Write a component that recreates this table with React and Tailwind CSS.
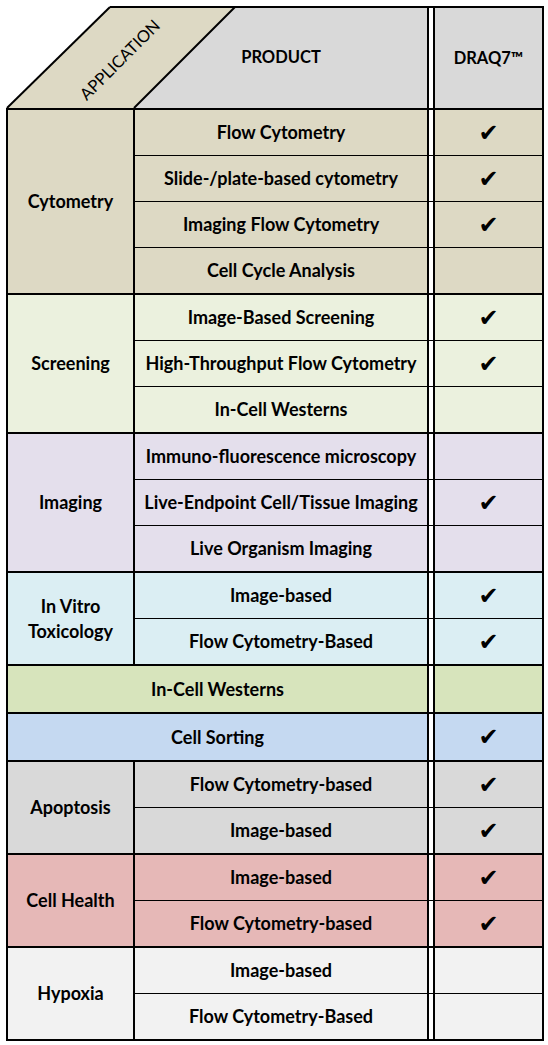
const CHECK = "\u2714";

const groups = [
  {
    name: "Cytometry",
    bg: "bg-[#ddd9c4]",
    rows: [
      ["Flow Cytometry", true],
      ["Slide-/plate-based cytometry", true],
      ["Imaging Flow Cytometry", true],
      ["Cell Cycle Analysis", false],
    ],
  },
  {
    name: "Screening",
    bg: "bg-[#ebf1de]",
    rows: [
      ["Image-Based Screening", true],
      ["High-Throughput Flow Cytometry", true],
      ["In-Cell Westerns", false],
    ],
  },
  {
    name: "Imaging",
    bg: "bg-[#e4dfec]",
    rows: [
      ["Immuno-fluorescence microscopy", false],
      ["Live-Endpoint Cell/Tissue Imaging", true],
      ["Live Organism Imaging", false],
    ],
  },
  {
    name: "In Vitro Toxicology",
    bg: "bg-[#dbeef3]",
    rows: [
      ["Image-based", true],
      ["Flow Cytometry-Based", true],
    ],
  },
  { name: "In-Cell Westerns", bg: "bg-[#d7e4bc]", single: true, check: false },
  { name: "Cell Sorting", bg: "bg-[#c5d9f1]", single: true, check: true },
  {
    name: "Apoptosis",
    bg: "bg-[#d9d9d9]",
    rows: [
      ["Flow Cytometry-based", true],
      ["Image-based", true],
    ],
  },
  {
    name: "Cell Health",
    bg: "bg-[#e6b8b7]",
    rows: [
      ["Image-based", true],
      ["Flow Cytometry-based", true],
    ],
  },
  {
    name: "Hypoxia",
    bg: "bg-[#f2f2f2]",
    rows: [
      ["Image-based", false],
      ["Flow Cytometry-Based", false],
    ],
  },
];

function Mark({ on }) {
  return (
    <div className="w-[107px] flex items-center justify-center">
      {on && (
        <span className="text-[24px] leading-none text-black font-['DejaVu_Sans',sans-serif]">
          {CHECK}
        </span>
      )}
    </div>
  );
}

function Sep() {
  return <div className="w-[8px] border-x-2 border-black bg-white" />;
}

function Header() {
  return (
    <div className="flex h-[102px] text-[16.5px]">
      <div className="relative w-[421px] h-full">
        <svg width="421" height="102" className="absolute inset-0">
          <polygon points="104,1 229,1 128,102 1,102" fill="#ddd9c4" />
          <polygon points="229,1 421,1 421,102 128,102" fill="#d9d9d9" />
          <line x1="104" y1="1" x2="421" y2="1" stroke="#000" strokeWidth="2" />
          <line x1="104" y1="1" x2="1" y2="102" stroke="#000" strokeWidth="2" />
          <line x1="229" y1="1" x2="128" y2="102" stroke="#000" strokeWidth="2" />
        </svg>
        <div className="absolute left-[114px] top-[54px] -translate-x-1/2 -translate-y-1/2 -rotate-45 whitespace-nowrap">
          APPLICATION
        </div>
        <div className="absolute left-[129px] right-0 top-0 bottom-0 flex items-center justify-center font-bold">
          PRODUCT
        </div>
      </div>
      <div className="w-[8px] border-x-2 border-t-2 border-black bg-white" />
      <div className="w-[109px] border-t-2 border-r-2 border-black bg-[#d9d9d9] flex items-center justify-center font-bold">
        DRAQ7™
      </div>
    </div>
  );
}

export default function App() {
  return (
    <div className="bg-white min-h-screen pt-[6px] pl-[6px] font-['Lato',sans-serif] text-[18px] text-black">
      <div className="w-[538px]">
        <Header />
        <div className="border-2 border-black divide-y-2 divide-black">
          {groups.map((g) =>
            g.single ? (
              <div key={g.name} className={"flex " + g.bg}>
                <div className="w-[419px] h-[46px] flex items-center justify-center font-bold">
                  {g.name}
                </div>
                <Sep />
                <Mark on={g.check} />
              </div>
            ) : (
              <div key={g.name} className={"flex " + g.bg}>
                <div className="w-[127px] border-r-2 border-black flex items-center justify-center text-center font-bold leading-[25px] px-1">
                  {g.name}
                </div>
                <div className="flex-1 flex flex-col">
                  {g.rows.map(([label, on], i) => (
                    <div
                      key={label + i}
                      className={i > 0 ? "flex h-[46px] border-t border-black" : "flex h-[45px]"}
                    >
                      <div className="w-[292px] flex items-center justify-center font-bold whitespace-nowrap">
                        {label}
                      </div>
                      <Sep />
                      <Mark on={on} />
                    </div>
                  ))}
                </div>
              </div>
            )
          )}
        </div>
      </div>
    </div>
  );
}
